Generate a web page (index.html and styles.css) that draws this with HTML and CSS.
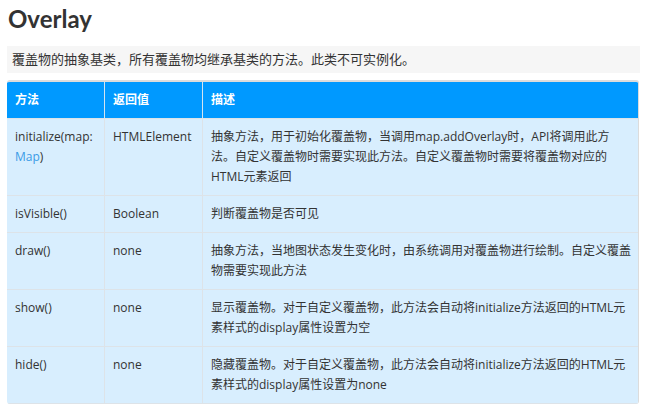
FILE: index.html
```html
<!DOCTYPE html>
<html lang="zh-CN">
<head>
<meta charset="utf-8">
<title>Overlay</title>
<link rel="stylesheet" href="styles.css">
</head>
<body>
<h2 class="title">Overlay</h2>
<p class="desc">覆盖物的抽象基类，所有覆盖物均继承基类的方法。此类不可实例化。</p>
<table class="api">
  <thead>
    <tr><th class="c1">方法</th><th class="c2">返回值</th><th>描述</th></tr>
  </thead>
  <tbody>
    <tr><td>initialize(map: <a class="link" href="#">Map</a>)</td><td>HTMLElement</td><td>抽象方法，用于初始化覆盖物，当调用map.addOverlay时，API将调用此方法。自定义覆盖物时需要实现此方法。自定义覆盖物时需要将覆盖物对应的HTML元素返回</td></tr>
    <tr><td>isVisible()</td><td>Boolean</td><td>判断覆盖物是否可见</td></tr>
    <tr><td>draw()</td><td>none</td><td>抽象方法，当地图状态发生变化时，由系统调用对覆盖物进行绘制。自定义覆盖物需要实现此方法</td></tr>
    <tr><td>show()</td><td>none</td><td>显示覆盖物。对于自定义覆盖物，此方法会自动将initialize方法返回的HTML元素样式的display属性设置为空</td></tr>
    <tr><td>hide()</td><td>none</td><td>隐藏覆盖物。对于自定义覆盖物，此方法会自动将initialize方法返回的HTML元素样式的display属性设置为none</td></tr>
  </tbody>
</table>
</body>
</html>
```
FILE: styles.css
```css
html, body {
  margin: 0;
  background: #fff;
}
body {
  padding: 0 12px 0 7px;
  font-family: "Open Sans", "Noto Sans CJK SC", sans-serif;
  font-size: 12px;
  color: #333;
}
.title {
  margin: 0;
  padding: 4px 0 0 1px;
  height: 46px;
  box-sizing: border-box;
  font-family: Lato, "Open Sans", sans-serif;
  font-size: 24px;
  line-height: 30px;
  font-weight: 700;
  color: #333;
}
.desc {
  margin: 0;
  height: 27px;
  box-sizing: border-box;
  padding: 4px 5px;
  font-size: 13px;
  line-height: 19px;
  background: #f6f6f6;
}
.api {
  margin-top: 7px;
  width: 632px;
  border-collapse: separate;
  border-spacing: 0;
  border-top: 2px solid #dcdcdc;
  border-right: 1px solid #dcdcdc;
  border-radius: 3px;
  overflow: hidden;
  table-layout: fixed;
}
.api th {
  background: #0099ff;
  color: #fff;
  font-weight: 700;
  text-align: left;
  padding: 8px;
  line-height: 20px;
  border-right: 1px solid #d4e4f0;
}
.api th:last-child, .api td:last-child { border-right: 0; padding-right: 5px; }
.api .c1 { width: 81px; }
.api .c2 { width: 81px; }
.api td {
  background: #d8eefe;
  vertical-align: top;
  padding: 8px;
  line-height: 20px;
  border-top: 1px solid #dde3e8;
  border-right: 1px solid #dde3e8;
}
.api tbody tr:last-child td { border-bottom: 1px solid #dde3e8; }
.link {
  color: #3a9be6;
  text-decoration: none;
}
```
